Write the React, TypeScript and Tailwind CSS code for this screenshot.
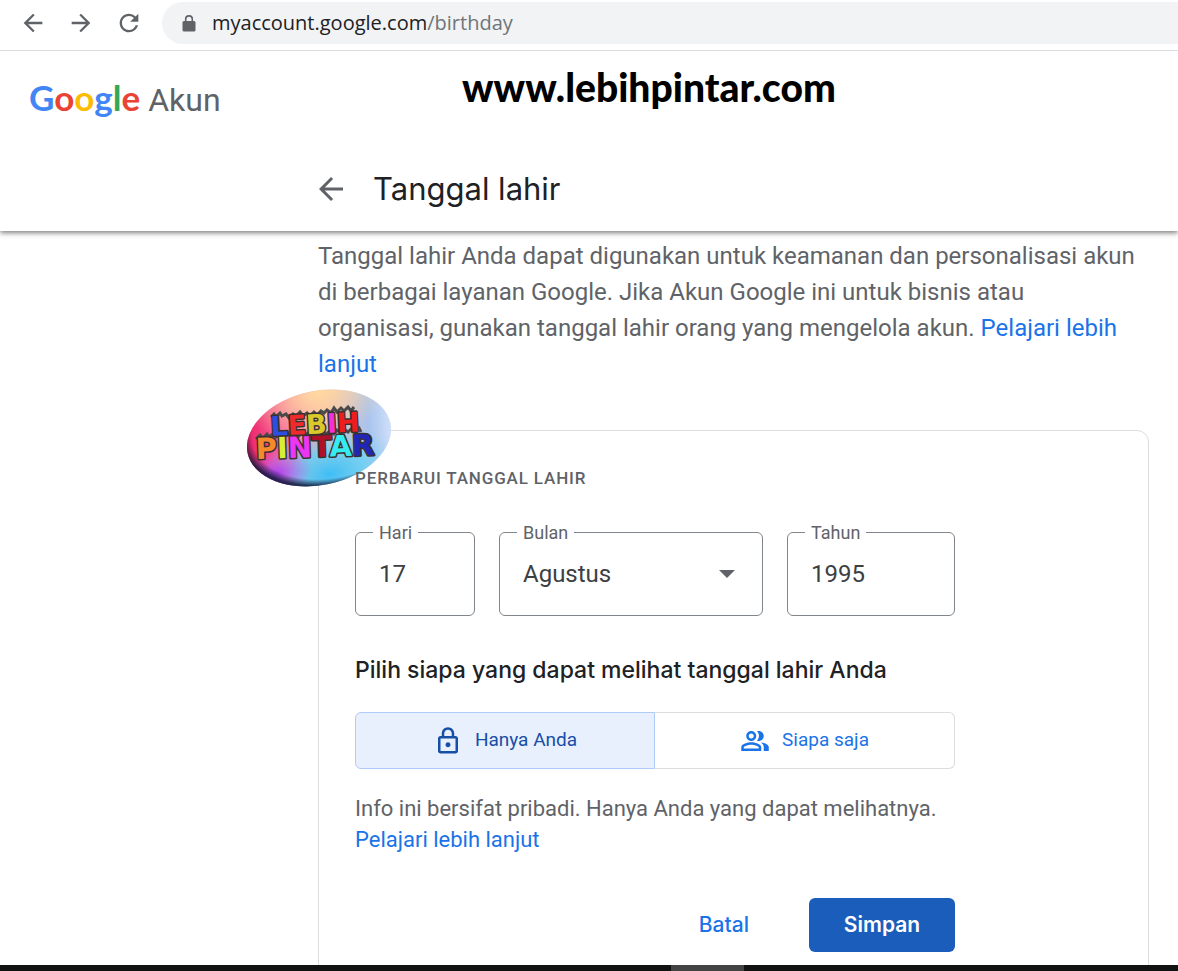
import { useState } from 'react'
import { MdArrowBack, MdArrowForward, MdOutlineLock, MdOutlinePeopleAlt, MdRefresh } from 'react-icons/md'

const months = [
  'Januari', 'Februari', 'Maret', 'April', 'Mei', 'Juni',
  'Juli', 'Agustus', 'September', 'Oktober', 'November', 'Desember',
]

const fieldBox = 'relative h-[84px] rounded-md border border-[#80868b]'
const fieldLabel = 'absolute -top-3 left-[17px] bg-white px-1.5 text-lg leading-6 text-[#5f6368]'
const fieldInput = 'h-full w-full bg-transparent px-[23px] text-2xl text-[#3c4043] outline-none'

function BrowserBar() {
  return (
    <nav className="flex h-[51px] shrink-0 items-center border-b border-[#dadce0] pb-1 pl-[19px] text-[#5f6368]">
      <button aria-label="Kembali" className="mr-5"><MdArrowBack size={28} /></button>
      <button aria-label="Maju" className="mr-5"><MdArrowForward size={28} /></button>
      <button aria-label="Muat ulang" className="mr-[19px]"><MdRefresh size={28} /></button>
      <div className="flex h-[42px] flex-1 items-center gap-4 rounded-l-full bg-[#f1f3f4] pl-5">
        <svg viewBox="0 0 14 17" className="h-[17px] w-3.5">
          <rect x="0.5" y="6" width="13" height="10.5" rx="1.5" fill="currentColor" />
          <path d="M3.7 7V4.2a3.3 3.3 0 0 1 6.6 0V7" fill="none" stroke="currentColor" strokeWidth="1.6" />
        </svg>
        <p className="font-['Open_Sans',sans-serif] text-xl text-[#202124]">
          myaccount.google.com<span className="text-[#70757a]">/birthday</span>
        </p>
      </div>
    </nav>
  )
}

function GoogleBrand() {
  return (
    <a href="#" className="flex items-baseline gap-2 text-[#5f6368]">
      <span className="font-[Lato,sans-serif] text-[35px] font-bold">
        <span className="text-[#4285f4]">G</span>
        <span className="text-[#ea4335]">o</span>
        <span className="text-[#fbbc04]">o</span>
        <span className="text-[#4285f4]">g</span>
        <span className="text-[#34a853]">l</span>
        <span className="text-[#ea4335]">e</span>
      </span>
      <span className="text-[32px]">Akun</span>
    </a>
  )
}

/* Oval badge laid over the corner of the card */
function Badge() {
  return (
    <svg viewBox="0 0 144 100" className="absolute -top-[43px] -left-[72px] h-[100px] w-36" role="img" aria-label="Lebih Pintar">
      <defs>
        <linearGradient id="side" x1="0" y1="0.4" x2="1" y2="0.5">
          <stop offset="0" stopColor="#ee1f66" />
          <stop offset="0.25" stopColor="#f5649a" />
          <stop offset="0.55" stopColor="#f6b9b0" />
          <stop offset="0.85" stopColor="#a9c4ee" />
          <stop offset="1" stopColor="#cfdff8" />
        </linearGradient>
        <radialGradient id="sun" cx="0.55" cy="0.02" r="0.5">
          <stop offset="0" stopColor="#ffd9a0" />
          <stop offset="1" stopColor="#ffd9a0" stopOpacity="0" />
        </radialGradient>
        <radialGradient id="sea" cx="0.52" cy="0.9" r="0.5">
          <stop offset="0" stopColor="#3fbdf6" />
          <stop offset="0.5" stopColor="#6bd2f3" stopOpacity="0.85" />
          <stop offset="1" stopColor="#8fd0f0" stopOpacity="0" />
        </radialGradient>
        <radialGradient id="violet" cx="0.16" cy="0.78" r="0.25">
          <stop offset="0" stopColor="#b03ff0" />
          <stop offset="1" stopColor="#d04fe8" stopOpacity="0" />
        </radialGradient>
        <radialGradient id="shade" cx="0.6" cy="0.4" r="0.62">
          <stop offset="0.89" stopColor="#101838" stopOpacity="0" />
          <stop offset="1" stopColor="#101838" stopOpacity="0.85" />
        </radialGradient>
      </defs>
      <g transform="rotate(-12 72 50)">
        <ellipse cx="72" cy="50" rx="73" ry="47" fill="url(#side)" />
        <ellipse cx="72" cy="50" rx="73" ry="47" fill="url(#sun)" />
        <ellipse cx="72" cy="50" rx="73" ry="47" fill="url(#sea)" />
        <ellipse cx="72" cy="50" rx="73" ry="47" fill="url(#violet)" />
        <ellipse cx="72" cy="50" rx="73" ry="47" fill="url(#shade)" />
      </g>
      <path
        d="M24 29l3-3 2 3 4-4 2 3 4-2 3 4 4-4 3 2 4-4 3 4 4-3 3 3 4-4 3 3 4-4 3 2 3-3 4 3 3-5 3 4 4-4 3 3 4-4 3 4 3-4M9 51l4-4 3 3 4-4 2 3 4-3 3 3 4-3 4 3 3-4 4 3 3-3 4 4 3-4 4 3 4-4 3 3 4-3 3 3 4-4 3 3 4-3 4 3 3-4 4 3 3-4 4 3 4-4 3 3 4-3 2 4"
        fill="none" stroke="#4a4a4a" strokeWidth="3"
      />
      <g fontFamily="DejaVu Sans, sans-serif" fontWeight="bold" stroke="#3a3030" strokeWidth="3" paintOrder="stroke" strokeLinejoin="round">
        <text transform="rotate(-3 24 48)" x="24" y="48" fontSize="27">
          <tspan fill="#2b4fe0">L</tspan><tspan fill="#ee2a2a">E</tspan><tspan fill="#d9c92b">B</tspan><tspan fill="#f230d8">I</tspan><tspan fill="#ee1c1c">H</tspan>
        </text>
        <text transform="rotate(-2 9 71)" x="9" y="71" fontSize="29">
          <tspan fill="#f58a2c">P</tspan><tspan fill="#d6ee35">I</tspan><tspan fill="#ee35f0">N</tspan><tspan fill="#b00f28">T</tspan><tspan fill="#35ecf0">A</tspan><tspan fill="#2026b8">R</tspan>
        </text>
      </g>
    </svg>
  )
}

export default function App() {
  const [visibility, setVisibility] = useState('private')

  return (
    <div className="flex h-screen flex-col overflow-hidden bg-white font-[Roboto,sans-serif] text-[#5f6368]">
      <BrowserBar />

      <header className="relative h-[180px] shrink-0 shadow-[0_2px_5px_rgba(0,0,0,0.5)] [clip-path:inset(0_0_-12px_0)]">
        <div className="flex h-[100px] items-center pl-[29px]">
          <div className="w-[433px] pb-2">
            <GoogleBrand />
          </div>
          <p className="pb-7 font-[Lato,sans-serif] text-[39px] font-black text-black">www.lebihpintar.com</p>
        </div>
        <div className="flex h-[76px] items-center gap-6 pl-[313px]">
          <button aria-label="Kembali"><MdArrowBack size={36} /></button>
          <h1 className="font-[Inter,sans-serif] text-[31px] text-[#202124]">Tanggal lahir</h1>
        </div>
      </header>

      <main className="min-h-0 flex-1 overflow-hidden pt-[7px] pr-[29px] pl-[318px]">
        <p className="pr-2 text-2xl leading-9">
          Tanggal lahir Anda dapat digunakan untuk keamanan dan personalisasi akun di berbagai layanan Google. Jika Akun
          Google ini untuk bisnis atau organisasi, gunakan tanggal lahir orang yang mengelola akun.{' '}
          <a href="#" className="text-[#1a73e8]">Pelajari lebih lanjut</a>
        </p>

        <section className="relative mt-12 rounded-xl border border-[#dadce0] px-9 pt-[35px] pb-12">
          <Badge />
          <h2 className="relative text-[17px] leading-6 font-medium tracking-wider">PERBARUI TANGGAL LAHIR</h2>

          <form className="max-w-[600px]" onSubmit={(e) => e.preventDefault()}>
            <div className="mt-[42px] flex gap-6">
              <div className={`${fieldBox} w-[120px]`}>
                <label htmlFor="day" className={fieldLabel}>Hari</label>
                <input id="day" defaultValue="17" className={fieldInput} />
              </div>
              <div className={`${fieldBox} flex-1`}>
                <label htmlFor="month" className={fieldLabel}>Bulan</label>
                <select id="month" defaultValue="Agustus" className={`${fieldInput} appearance-none`}>
                  {months.map((m) => <option key={m}>{m}</option>)}
                </select>
                <svg viewBox="0 0 16 8" className="pointer-events-none absolute top-[37px] right-[27px] h-2 w-4 fill-[#5f6368]">
                  <path d="M0 0h16L8 8z" />
                </svg>
              </div>
              <div className={`${fieldBox} w-[168px]`}>
                <label htmlFor="year" className={fieldLabel}>Tahun</label>
                <input id="year" defaultValue="1995" className={fieldInput} />
              </div>
            </div>

            <h3 className="mt-9 font-[Inter,sans-serif] text-[23px] leading-9 font-medium text-[#202124]">
              Pilih siapa yang dapat melihat tanggal lahir Anda
            </h3>

            <div className="mt-6 grid h-[57px] grid-cols-2 text-[19px]">
              <label className="flex items-center justify-center gap-3 rounded-l-md border border-[#dadce0] text-[#1a73e8] has-checked:border-[#aecbfa] has-checked:bg-[#e8f0fe] has-checked:text-[#174ea6]">
                <input type="radio" name="visibility" className="sr-only" checked={visibility === 'private'} onChange={() => setVisibility('private')} />
                <MdOutlineLock size={30} />
                Hanya Anda
              </label>
              <label className="flex items-center justify-center gap-3 rounded-r-md border border-l-0 border-[#dadce0] text-[#1a73e8] has-checked:border-[#aecbfa] has-checked:bg-[#e8f0fe] has-checked:text-[#174ea6]">
                <input type="radio" name="visibility" className="sr-only" checked={visibility === 'public'} onChange={() => setVisibility('public')} />
                <MdOutlinePeopleAlt size={30} />
                Siapa saja
              </label>
            </div>

            <div className="mt-6 text-[22px] leading-[31px]">
              <p>Info ini bersifat pribadi. Hanya Anda yang dapat melihatnya.</p>
              <a href="#" className="text-[#1a73e8]">Pelajari lebih lanjut</a>
            </div>

            <div className="mt-[43px] flex justify-end gap-6 font-[Inter,sans-serif] text-[21px]">
              <button type="button" className="h-[54px] px-9 font-medium text-[#1a73e8]">Batal</button>
              <button type="submit" className="h-[54px] w-[146px] rounded-md bg-[#1b5dbb] font-semibold text-white">Simpan</button>
            </div>
          </form>
        </section>
      </main>

      <div className="flex h-[6px] shrink-0 justify-center bg-[#101312]">
        <div className="ml-[236px] w-[73px] bg-[#434343]" />
      </div>
    </div>
  )
}
